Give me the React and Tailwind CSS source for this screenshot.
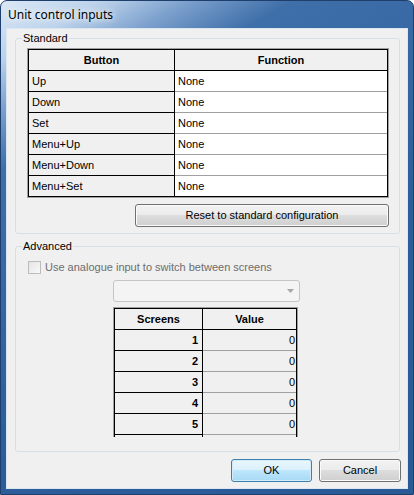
import React from 'react';

const font = "font-['Liberation_Sans',Arial,sans-serif]";

const standardRows = ['Up', 'Down', 'Set', 'Menu+Up', 'Menu+Down', 'Menu+Set'];
const screens = [1, 2, 3, 4, 5];

const WinButton = ({ children, className = '', primary = false }) => (
    <div
        className={
            'flex items-center justify-center rounded-[3px] border ' +
            (primary
                ? 'border-[#3c7fb1] bg-[linear-gradient(#eaf6fd_0%,#d9f0fc_50%,#bee6fd_50%,#a7d9f5_100%)] shadow-[inset_0_0_0_1px_#d3ebfa] '
                : 'border-[#707070] bg-[linear-gradient(#f2f2f2_0%,#ebebeb_50%,#dddddd_50%,#cfcfcf_100%)] shadow-[inset_0_0_0_1px_#fbfbfb] ') +
            className
        }
    >
        {children}
    </div>
);

const GroupBox = ({ label, className = '', children }) => (
    <div className={'relative rounded-[3px] border border-[#d5dfe5] ' + className}>
        <span className="absolute -top-[8px] left-[6px] bg-[#f0f0f0] px-[1px] leading-[14px] text-black">
            {label}
        </span>
        {children}
    </div>
);

const StandardTable = () => (
    <div className="w-[362px] border border-[#a0a0a0]">
        <div className="border border-black bg-white">
            <div className="flex h-[21px] border-b border-black bg-[#f0f0f0] font-bold">
                <div className="flex w-[146px] items-center justify-center border-r border-black">Button</div>
                <div className="flex flex-1 items-center justify-center">Function</div>
            </div>
            {standardRows.map((name, i) => {
                const last = i === standardRows.length - 1;
                return (
                    <div key={name} className={'flex ' + (last ? 'h-[20px]' : 'h-[21px]')}>
                        <div
                            className={
                                'flex w-[146px] items-center border-r border-black bg-[#f0f0f0] pl-[3px] ' +
                                (last ? '' : 'border-b')
                            }
                        >
                            {name}
                        </div>
                        <div
                            className={
                                'flex flex-1 items-center bg-white pl-[3px] ' +
                                (last ? '' : 'border-b border-[#a0a0a0]')
                            }
                        >
                            None
                        </div>
                    </div>
                );
            })}
        </div>
    </div>
);

const ScreensTable = () => (
    <div className="w-[185px] border-l border-r border-t border-[#a0a0a0]">
        <div className="border-l border-r border-t border-black bg-[#f0f0f0]">
            <div className="flex h-[21px] border-b border-black font-bold">
                <div className="flex w-[88px] items-center justify-center border-r border-black">Screens</div>
                <div className="flex flex-1 items-center justify-center">Value</div>
            </div>
            {screens.map((n) => (
                <div key={n} className="flex h-[21px]">
                    <div className="flex w-[88px] items-center justify-end border-b border-r border-black pr-[4px] font-bold">
                        {n}
                    </div>
                    <div className="flex flex-1 items-center justify-end border-b border-[#a0a0a0] pr-[1px]">0</div>
                </div>
            ))}
            <div className="flex h-[2px]">
                <div className="w-[88px] border-r border-black" />
            </div>
        </div>
    </div>
);

export default function App() {
    return (
        <div className="h-[495px] w-[414px] bg-white">
            <div className="flex h-full w-full flex-col rounded-t-[7px] border border-[#1e3f6b] bg-[linear-gradient(150deg,#dbe8f6_0%,#bcd2eb_8%,#7a9fcc_15%,#3f6fa9_23%,#2c5e9b_60%,#2a5a96_100%)]">
                <div className="flex h-[27px] items-center pl-[7px] font-['Noto_Sans',sans-serif] text-[12px] text-black [text-shadow:0_0_6px_#ffffff,0_0_10px_#ffffff]">
                    Unit control inputs
                </div>
                <div className={'mx-[5px] mb-[5px] flex-1 border border-[#dbe6f3] bg-[#f0f0f0] text-[11px] text-black ' + font}>
                    <GroupBox label="Standard" className="ml-[8px] mt-[9px] h-[196px] w-[385px]">
                        <div className="pl-[11px] pt-[9px]">
                            <StandardTable />
                            <WinButton className="ml-[108px] mt-[6px] h-[23px] w-[254px]">
                                Reset to standard configuration
                            </WinButton>
                        </div>
                    </GroupBox>
                    <GroupBox label="Advanced" className="ml-[8px] mt-[12px] h-[206px] w-[385px]">
                        <div className="pl-[12px] pt-[14px]">
                            <div className="flex h-[13px] items-center gap-[4px]">
                                <div className="h-[13px] w-[13px] border border-[#bcbcbc] bg-[linear-gradient(135deg,#e4e4e4,#f9f9f9)]" />
                                <span className="text-[#6d6d6d]">Use analogue input to switch between screens</span>
                            </div>
                            <div className="ml-[85px] mt-[6px] flex h-[22px] w-[187px] items-center justify-end rounded-[3px] border border-[#c5c5c5] bg-[#f4f4f4] pr-[5px]">
                                <svg width="7" height="4" viewBox="0 0 7 4">
                                    <path d="M0 0h7L3.5 4z" fill="#a7a7a7" />
                                </svg>
                            </div>
                            <div className="ml-[85px] mt-[5px]">
                                <ScreensTable />
                            </div>
                        </div>
                    </GroupBox>
                    <div className="mr-[6px] mt-[7px] flex justify-end gap-[7px]">
                        <WinButton primary className="h-[23px] w-[81px]">OK</WinButton>
                        <WinButton className="h-[23px] w-[82px]">Cancel</WinButton>
                    </div>
                </div>
            </div>
        </div>
    );
}
